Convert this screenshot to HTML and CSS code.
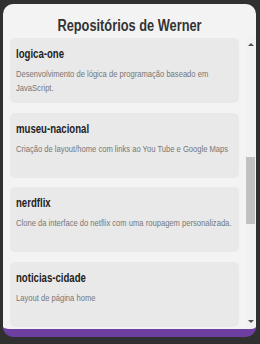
FILE: index.html
```html
<!DOCTYPE html>
<html lang="pt-BR">
<head>
  <meta charset="UTF-8">
  <title>Repositórios de Werner</title>
  <link rel="stylesheet" href="styles.css">
</head>
<body>
  <div class="panel">
    <h1>Repositórios de Werner</h1>

    <div class="content">
      <div class="list">
        <div class="repo">
          <h2>logica-one</h2>
          <p>Desenvolvimento de lógica de programação baseado em JavaScript.</p>
        </div>
        <div class="repo">
          <h2>museu-nacional</h2>
          <p>Criação de layout/home com links ao You Tube e Google Maps</p>
        </div>
        <div class="repo">
          <h2>nerdflix</h2>
          <p>Clone da interface do netflix com uma roupagem personalizada.</p>
        </div>
        <div class="repo">
          <h2>noticias-cidade</h2>
          <p>Layout de página home</p>
        </div>
      </div>

      <div class="scrollbar">
        <div class="arrow up"></div>
        <div class="track">
          <div class="thumb" style="height: 67px; margin-top: 105px;"></div>
        </div>
        <div class="arrow down"></div>
      </div>
    </div>
  </div>
</body>
</html>
```

FILE: styles.css
```css
html, body {
  margin: 0;
  background: #303030;
}
body {
  font-family: "Liberation Sans", Arial, sans-serif;
}
.panel {
  margin: 4px 4px 0 3px;
  height: 333px;
  box-sizing: border-box;
  background: #f3f3f3;
  border-radius: 10px;
  border-bottom: 8px solid #6c3fa0;
  overflow: hidden;
  display: flex;
  flex-direction: column;
}
h1 {
  margin: 0;
  padding: 12px 0 1px;
  font-size: 16px;
  line-height: 20px;
  text-align: center;
  color: #333;
  transform: scaleX(0.8);
}
.content {
  flex: 1;
  min-height: 0;
  display: flex;
}
.list {
  flex: 1;
  overflow: hidden;
  padding: 1px 7px 0;
  display: flex;
  flex-direction: column;
  gap: 9.5px;
}
.repo {
  flex-shrink: 0;
  height: 65px;
  box-sizing: border-box;
  padding: 9px 4px 7px 6px;
  background: #e9e9e9;
  border-radius: 5px;
}
.repo h2 {
  margin: 0 0 6px;
  font-size: 12px;
  line-height: 14px;
  color: #222;
  width: 125%;
  transform: scaleX(0.8);
  transform-origin: left;
}
.repo p {
  margin: 0;
  font-size: 9.5px;
  line-height: 13.5px;
  color: #777;
  width: 127%;
  transform: scaleX(0.8);
  transform-origin: left;
}

/* barra de rolagem */
.scrollbar {
  width: 9px;
  margin-right: 1px;
  background: #f1f1f1;
  display: flex;
  flex-direction: column;
}
.arrow {
  height: 15px;
  display: flex;
  align-items: center;
  justify-content: center;
}
.arrow::before {
  content: "";
  border-left: 3px solid transparent;
  border-right: 3px solid transparent;
}
.arrow.up::before {
  border-bottom: 3px solid #505050;
}
.arrow.down::before {
  border-top: 3px solid #505050;
}
.track {
  flex: 1;
}
.thumb {
  background: #c1c1c1;
}
```
